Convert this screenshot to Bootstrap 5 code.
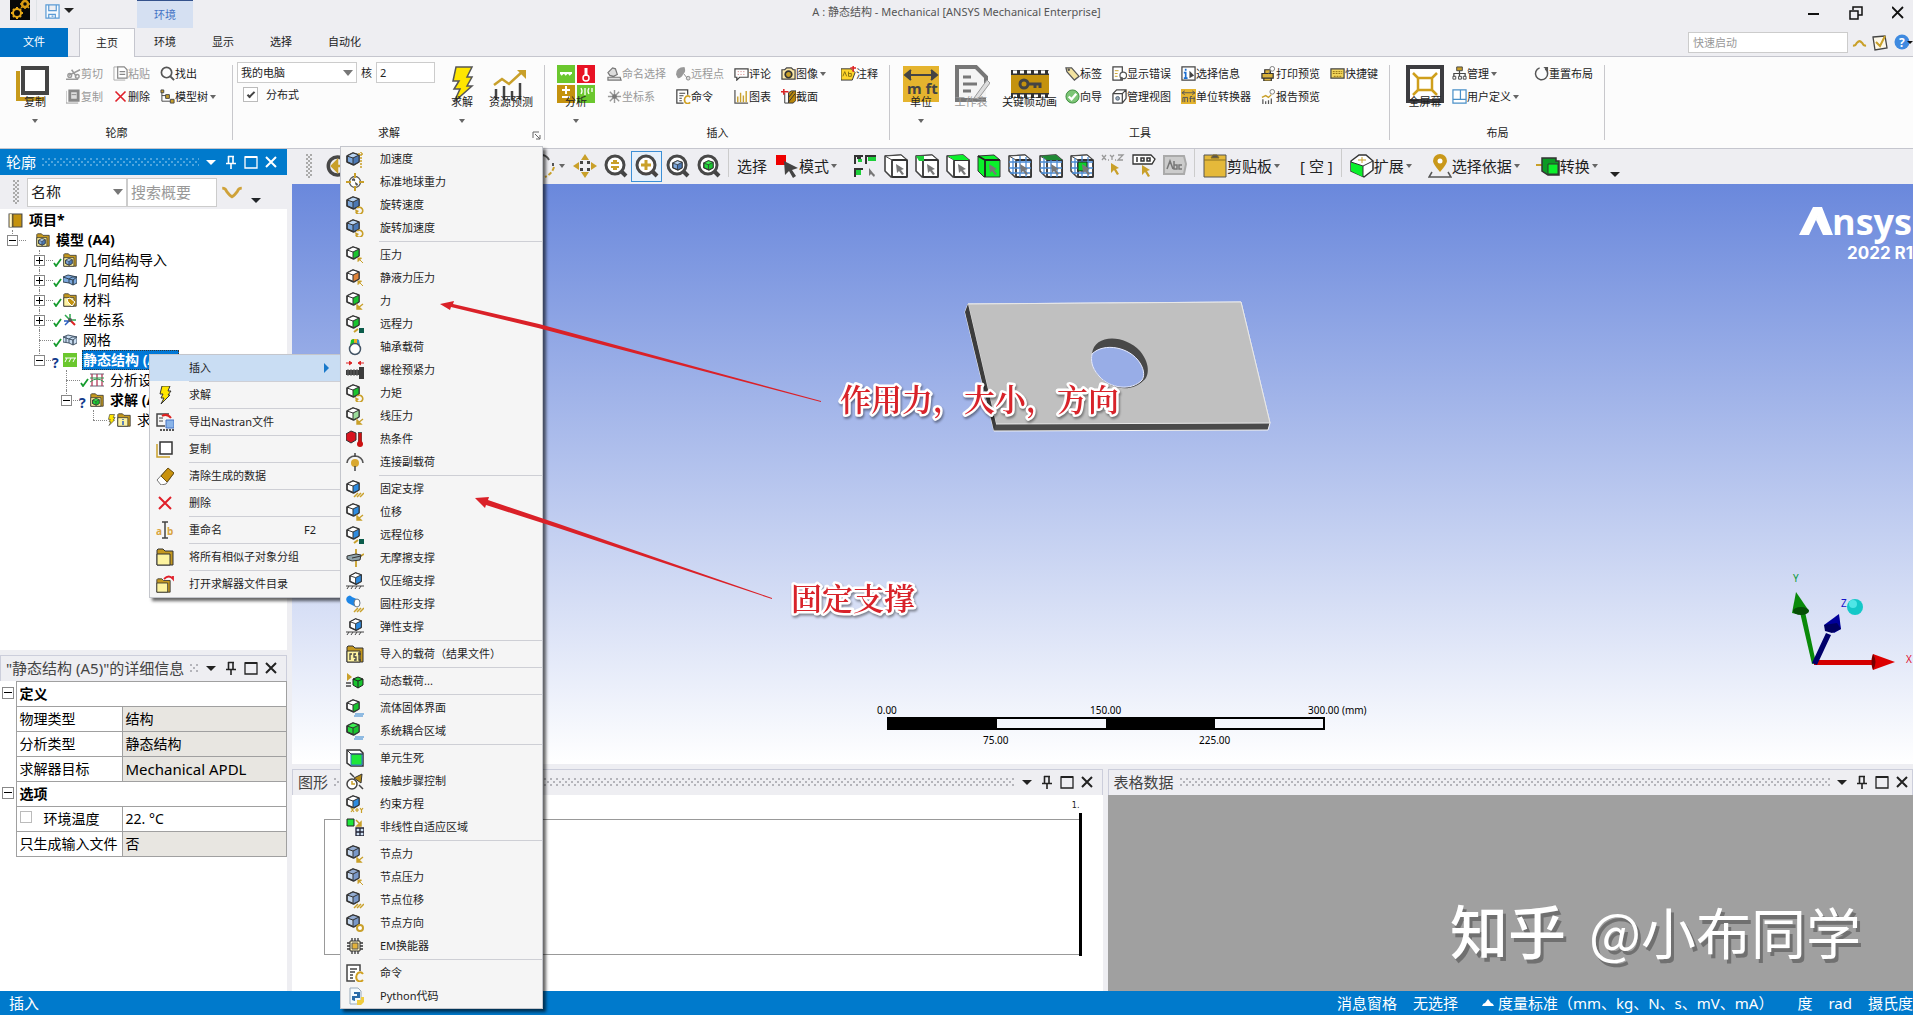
<!DOCTYPE html>
<html lang="zh-CN">
<head>
<meta charset="utf-8">
<meta name="viewport" content="width=device-width, initial-scale=1">
<title>A : 静态结构 - Mechanical [ANSYS Mechanical Enterprise]</title>
<link href="https://cdn.jsdelivr.net/npm/bootstrap@5.3.0/dist/css/bootstrap.min.css" rel="stylesheet">
<style>
:root{--chrome:#eeeef2;--accent:#007acc;--line:#c5c6ce;--gold:#c9a02a;--ink:#222}
body{font-family:"Noto Sans","Noto Sans CJK SC",sans-serif;font-size:11px;line-height:14px;color:var(--ink);background:var(--chrome)}
svg{flex:none;display:block}
.btn{--bs-btn-padding-x:0;--bs-btn-padding-y:0;--bs-btn-font-size:inherit;--bs-btn-line-height:inherit;--bs-btn-border-radius:0;--bs-btn-border-width:0;--bs-btn-color:inherit;white-space:nowrap}
.i14{width:14px;height:14px}.i15{width:15px;height:15px}.i18{width:18px;height:18px}.i24{width:24px;height:24px}
.tri{width:0;height:0;border:3px solid transparent;border-top:4px solid #666;border-bottom:0;flex:none}
.tri-l{border-width:5px;border-top:5px solid currentColor;border-bottom:0}
.gut5{margin-right:5px}
/* title */
.titlebar{height:28px}
.titlebar .side{flex:1 1 0}
.titletext{font-size:11px;line-height:18px;color:#555;padding-top:3px}
.ctxtab{width:56px;height:28px;margin-left:63px;background:#d5e0f2;border-top:1px solid #34528c;color:#4472c4}
.winbtn{width:30px;height:26px;margin-left:12px}
/* tabs */
.tabrow{height:29px;border-bottom:1px solid var(--line)}
.tabrow .nav-link{padding:0 18px;line-height:28px;color:var(--ink);height:29px}
.tabrow .file{background:#0072c6;color:#fff;padding:0 23px;margin-right:11px}
.tabrow .current{background:#fcfcfc;border:1px solid var(--line);border-bottom:0;padding:0 16px;margin-right:1px}
.quick{width:160px;height:21px;border:1px solid #ccc;font-size:11px;padding:2px 4px;color:#999}
/* ribbon */
.ribbon{background:#fcfcfc;border-bottom:1px solid var(--line);padding:5px 0 8px;height:92px}
.rgroup{background:linear-gradient(#c8c8cc,#c8c8cc) right bottom/1px 75px no-repeat}
.rgroup .cols{gap:10px}
.sb{height:23px}
.sb .tri{margin:0 5px 0 2px}
.big{padding-top:3px;height:64px;min-width:38px}
.big svg{width:38px;height:38px}
.big .cap{margin-top:-8px;position:relative}
.big .tri{margin-top:10px}
.dim{color:#999;opacity:1}
.rsel{width:120px}.selwrap{position:relative}
.selwrap::after{content:"";position:absolute;right:4px;top:50%;margin-top:-3px;border:5px solid transparent;border-top:6px solid #777;border-bottom:0;pointer-events:none}
.fld{border:1px solid #ccc;border-radius:0;background:#fff;color:var(--ink);padding:0 3px;appearance:none;height:21px;width:100%}
.fld::placeholder,.quick::placeholder{color:#999}
.w59{width:59px}
.tick{width:15px;height:15px;appearance:none;border:1px solid #bbb;background:#fff;margin:0 8px 0 6px;position:relative}
.tick:checked::after{content:"";position:absolute;left:3px;top:4px;width:8px;height:4px;border:solid #444;border-width:0 0 2px 2px;transform:rotate(-45deg)}
/* toolbars */
.grip{width:6px;height:24px;background:radial-gradient(circle at 1px 1px,#aaa 1px,transparent 1px) 0 0/4px 4px,radial-gradient(circle at 1px 1px,#aaa 1px,transparent 1px) 2px 2px/4px 4px}
.gfx{height:35px;font-size:15px;line-height:20px;padding:0 0 1px 14px}
.gfx .cell{width:31px;height:31px}
.gfx .on{border:1px solid #3c8fd6;background:#e6f0fa}
.gfx .vr{height:28px;opacity:1;background:#ccc}
.gfx .tri{margin-left:2px}
.under-menu{width:182px}
/* docked panels */
.phead{height:26px;font-size:15px;line-height:20px;color:#444;border:1px solid #cccedb;border-bottom:0;padding:0 5px 1px 5px}
.phead.lit{background:var(--accent);border-color:var(--accent);color:#fff}
.phead .dots{height:9px;margin:0 2px 0 6px;background:radial-gradient(circle at 1px 1px,#b4b4ba 1px,transparent 1px) 0 0/6px 6px,radial-gradient(circle at 1px 1px,#b4b4ba 1px,transparent 1px) 3px 3px/6px 6px}
.phead.lit .dots{background:radial-gradient(circle at 1px 1px,#4fa5de 1px,transparent 1px) 0 0/6px 6px,radial-gradient(circle at 1px 1px,#4fa5de 1px,transparent 1px) 3px 3px/6px 6px}
.phead .pb{width:20px;height:20px;color:#222}
.phead.lit .pb{color:#fff}
.leftcol{width:287px}
.findbar{height:34px;padding-left:13px;font-size:15px}
.findbar .fld{height:29px}
.w100x{width:100px}.w89{width:90px}
/* tree */
.tree{font-size:14px;line-height:20px;color:#000;padding-top:1px;background:#fff}
.tree ul{list-style:none;margin:0;padding:0}
.tree ul ul{padding-left:27px}
.tree li{position:relative}
.tree li::after{content:"";position:absolute;left:12px;top:0;bottom:0;border-left:1px dotted #888}
.tree li:last-child::after{bottom:auto;height:10px}
.tree .node{height:20px;display:flex;align-items:center;position:relative;white-space:nowrap}
.tree .node::before{content:"";position:absolute;left:12px;width:14px;top:10px;border-top:1px dotted #888}
.tree .ex{width:25px;z-index:1;display:flex;justify-content:center;position:relative}
.exbox{width:11px;height:11px;border:1px solid #888;background:#fff;position:relative;display:block;padding:0}
.exbox::before{content:"";position:absolute;left:1px;right:1px;top:4px;height:1px;background:#000}
.exbox.plus::after{content:"";position:absolute;top:1px;bottom:1px;left:4px;width:1px;background:#000}
.tree .st{width:11px;height:14px;z-index:1}
.tree .tx{margin-left:5px;padding:0 1px}
.tree .sel{background:#0078d7;color:#fff;outline:1px dotted #333;outline-offset:-1px;padding-right:9px}
.mark-q{font-weight:700;color:#123a8c;width:11px;text-align:center;padding-top:5px}
/* details */
.lowleft{height:341px;padding-top:5px}
.props{font-size:14px;line-height:20px;color:#000;width:100%;table-layout:fixed;border-collapse:collapse}
.props td,.props th{height:25px;padding:0 4px 0 3px;border:1px solid #a0a0a0;white-space:nowrap;overflow:hidden;font-weight:400}
.props .gut{border:0;padding:0 0 0 2px;width:16px;vertical-align:top}
.props .gut .exbox{margin-top:5px;width:12px;height:12px}
.props .ro{background:#e8e6e1}
.props .lat{font-size:15px}
.props th.sec{font-weight:700}
.props .gutcol{width:16px}
.props .namecol{width:106px}
.cbx{width:12px;height:12px;appearance:none;border:1px solid #bbb;margin:0 12px 0 0;vertical-align:1px}
/* bottom */
.dock{height:227px;padding-top:5px}
.gcol{flex:810 1 0}.tcol{flex:805 1 0}
.gbody{background:#fff;padding:4px 22px 36px 32px}
.gbody .end{height:20px;font:8px/14px "DejaVu Sans",sans-serif;padding-right:1px}
.plot{border:1px solid #999;position:relative}
.plot::after{content:"";position:absolute;right:-2px;top:-7px;bottom:-2px;width:3px;background:#000}
.grid-body{background:#a0a0a0}
.status{height:24px;background:var(--accent);color:#fff;font-size:15px;line-height:24px;padding-left:9px;overflow:hidden}
.status span{white-space:nowrap}
.view{background:linear-gradient(#6a88dc,#fff)}
/* menus */
.pop{position:absolute;background:#f5f5f5;border:1px solid #c4c6cc;box-shadow:3px 3px 3px rgba(0,0,0,.6);z-index:5;padding:0 0 1px}
.pop button{display:flex;align-items:center;width:100%;border:0;background:none;padding:0;text-align:left;color:#1e1e1e;white-space:nowrap}
.pop hr{margin:2px 0 1px 38px;border-color:#b4b6c0;opacity:.6}
#ctx{left:149px;top:354px;width:200px;padding:0}
#ctx button{height:26px;padding-left:6px;gap:15px}
#ctx hr{margin:0 0 0 39px}
#ctx .hot{background:#c9ddf3}
#sub{left:340px;top:146px;width:203px}
#sub button{height:23px;padding-left:5px;gap:16px}
.cube-g{--f:#fff;--r:#19c42f;--t:#fff}.cube-b{--f:#fff;--r:#2d8be0;--t:#fff}.cube-s{--f:#7ba7dc;--r:#4b78b4;--t:#b9d4f2}
.cube-w{--f:#fff;--r:#9cdc9c;--t:#fff}.cube-gg{--f:#22d83a;--r:#19c42f;--t:#3cf052}.cube-n{--f:#c3d6ee;--r:#7897c8;--t:#93abd0}.cube-h{--f:#fff;--r:#e0843a;--t:#fff}
.over{position:absolute;inset:0;z-index:8;pointer-events:none;width:100%;height:100%}
.note{font-family:"Noto Serif CJK SC","Noto Sans CJK SC",serif;font-weight:600;font-size:31px;fill:#d8232a;stroke:#fff;stroke-width:5px;stroke-linejoin:round;paint-order:stroke;filter:drop-shadow(1px 2px 1px rgba(0,0,0,.4))}
.wm{font-family:"Noto Sans CJK SC",sans-serif;fill:#fff;filter:drop-shadow(3px 4px 0 rgba(80,80,80,.6))}
.wm-logo{font-size:58px;font-weight:500}.wm-name{font-size:55px}
.axis{font:10px "Noto Sans",sans-serif}
</style>
<script src="https://cdn.jsdelivr.net/npm/bootstrap@5.3.0/dist/js/bootstrap.bundle.min.js"></script>
</head>
<body class="vh-100 overflow-hidden position-relative d-flex flex-column">

<svg width="0" height="0" class="position-absolute" aria-hidden="true"><defs>
<symbol id="cube" viewBox="0 0 18 18"><path d="M1 4l6-3 6 2v7l-5 3-7-3z" fill="var(--f)" stroke="#333" stroke-width="1.4" stroke-linejoin="round"/><path d="M1 4l6-3 6 2-5 3z" fill="var(--t)"/><path d="M7 6l6-3v7l-6 3z" fill="var(--r)"/><path d="M1 4l6-3 6 2v7l-6 3-6-3zM1 4l6 2 6-3M7 6v7" fill="none" stroke="#333" stroke-linejoin="round"/></symbol>
<symbol id="o-arr" viewBox="0 0 18 18"><path d="M17 12l-5 4M11 17v-4l4 4z" fill="#c9a02a" stroke="#c9a02a" stroke-width="1.4"/></symbol>
<symbol id="o-ul" viewBox="0 0 18 18"><path d="M17 17l-4-4M12 12h3.500l-3.500 3.500z" fill="#c9a02a" stroke="#c9a02a"/></symbol>
<symbol id="o-rot" viewBox="0 0 18 18"><path d="M11 12a3.500 3.500 0 1 1-1 4" fill="none" stroke="#c9a02a" stroke-width="1.600"/><path d="M9 13l1 5 3-3z" fill="#c9a02a"/></symbol>
<symbol id="o-hat" viewBox="0 0 18 18"><path d="M8 17l4-4M11 17l4-4M14 17l4-4" stroke="#c9a02a" stroke-width="1.500"/></symbol>
<symbol id="o-box" viewBox="0 0 18 18"><path d="M13 13h5v5h-5z" fill="#0b5c4b"/><path d="M8 17l4-3" stroke="#c9a02a" stroke-width="2"/></symbol>
<symbol id="o-hz" viewBox="0 0 18 18"><path d="M9 15h9M8 17h9" stroke="#6fa8dc" stroke-width="1.500"/></symbol>
<symbol id="o-gnd" viewBox="0 0 18 18"><path d="M0 14h18" stroke="#444"/><path d="M1 17l2-3M5 17l2-3M9 17l2-3M13 17l2-3" stroke="#444"/></symbol>
<symbol id="m-grav" viewBox="0 0 18 18"><circle cx="9" cy="9" r="5.500" fill="#fff" stroke="#555" stroke-width="1.300"/><path d="M6 6c2-2 4 0 3 2s3 1 3 4c-2 2-3-1-3-3S5 9 6 6" fill="#555"/><path d="M9 0v5M9 13v5M0 9h5M13 9h5" stroke="#c9a02a" stroke-width="2"/></symbol>
<symbol id="m-bear" viewBox="0 0 18 18"><path d="M4 8l2-7h6l2 7z" fill="#f0b020"/><path d="M4 8l1-6 3-1v6z" fill="#19c42f"/><path d="M11 1l2 1 1 6-3-2z" fill="#3a8ed0"/><circle cx="9" cy="11" r="5.500" fill="#fff" stroke="#456" stroke-width="1.500"/></symbol>
<symbol id="m-bolt" viewBox="0 0 18 18"><path d="M0 2h5M13 2h5M3 0l3 2-3 2M15 0l-3 2 3 2" stroke="#d22" fill="#d22"/><path d="M0 9h13V6h5v12h-5v-4H0z" fill="#3c3c3c"/><path d="M2 8v7M5 8v7M8 8v7M11 8v7" stroke="#666"/></symbol>
<symbol id="m-heat" viewBox="0 0 18 18"><path d="M0 4l5-3 5 2v7l-5 3-5-3z" fill="#d81420" stroke="#333"/><path d="M14 2v10" stroke="#555" stroke-width="4"/><path d="M14 3v10" stroke="#c11" stroke-width="3"/><circle cx="14" cy="14" r="3" fill="#c11"/></symbol>
<symbol id="m-joint" viewBox="0 0 18 18"><path d="M1 10a8 7 0 0 1 16 0" fill="none" stroke="#555" stroke-width="1.600"/><circle cx="9" cy="10" r="4" fill="#d9a830"/><path d="M9 0v4M9 13v5" stroke="#444" stroke-width="1.500"/></symbol>
<symbol id="m-fric" viewBox="0 0 18 18"><path d="M10 0v18M10 10l8-5" stroke="#c9a02a" stroke-width="1.800"/><path d="M1 7l9-2 5 1-1 5-8 1-5-2z" fill="#8fa3ab" stroke="#333"/><path d="M6 9l9-2" stroke="#333"/></symbol>
<symbol id="m-cyl" viewBox="0 0 18 18"><path d="M1 2q3-3 5 0l7 3q2 6-3 7L2 8q-3-3-1-6z" fill="#1e86e6"/><ellipse cx="11" cy="8" rx="3" ry="4" fill="#fff" stroke="#678"/><path d="M8 17l4-4M11 17l4-4M14 17l4-4" stroke="#c9a02a" stroke-width="1.500"/></symbol>
<symbol id="fold" viewBox="0 0 18 18"><path d="M1 17V2l1-1h5l2 2h8v14z" fill="#c4981f" stroke="#333"/><path d="M1 6h13v11H1z" fill="#fdf3a0" stroke="#333"/></symbol>
<symbol id="m-dyn" viewBox="0 0 18 18"><path d="M1 1l5 4-5 4z" fill="#c9a02a"/><path d="M0 11h5M0 14h5" stroke="#444" stroke-width="1.500"/><path d="M7 7l5-2 5 2v6l-5 3-5-3z" fill="#19c42f" stroke="#222"/><path d="M7 7l5 2 5-2M12 9v7" fill="none" stroke="#222"/></symbol>
<symbol id="m-life" viewBox="0 0 18 18"><path d="M1 1h13l3 3v13H5l-4-3z" fill="#fff" stroke="#333" stroke-width="1.500"/><path d="M5 5h11v11H5z" fill="#1ee63a" stroke="#2b7bd0"/><path d="M1 1l4 4h12" fill="none" stroke="#333"/></symbol>
<symbol id="m-step" viewBox="0 0 18 18"><circle cx="6" cy="12" r="5" fill="#fff" stroke="#444" stroke-width="1.500"/><path d="M6 9v3h3" fill="none" stroke="#c9a02a" stroke-width="1.500"/><path d="M8 6l8-4-1 9z" fill="#b38a1a" stroke="#333"/><path d="M4 1l4 4M13 13l4 4" stroke="#444" stroke-width="1.500"/></symbol>
<symbol id="m-ce" viewBox="0 0 18 18"><path d="M5 13l3 4M8 13l-3 4M9 15h4M11 13v4M14 13l1.500 2 1.500-2M15.500 15v3" stroke="#c9a02a" stroke-width="1.200" fill="none"/></symbol>
<symbol id="m-nla" viewBox="0 0 18 18"><path d="M1 1h7v7H1z" fill="#1ee63a" stroke="#222"/><path d="M10 2l4 4M15 4v4h-4z" stroke="#c9a02a" stroke-width="1.500" fill="#c9a02a"/><path d="M10 10h8v8h-8zM14 10v8M10 14h8" fill="#cfe2f5" stroke="#223" stroke-width="1.300"/></symbol>
<symbol id="m-chip" viewBox="0 0 18 18"><path d="M6 1v16M9 1v16M12 1v16M1 6h16M1 9h16M1 12h16" stroke="#333" stroke-width="1.300"/><path d="M4 4h10v10H4z" fill="#fff3c0" stroke="#333"/><path d="M6 6h6v6H6z" fill="#e3b23a" stroke="#555"/></symbol>
<symbol id="cmd" viewBox="0 0 18 18"><path d="M9 17H1V1h13v6" fill="#fff" stroke="#444" stroke-width="1.500"/><path d="M4 5h7M4 8h5M4 11h3M4 14h3" stroke="#444" stroke-width="1.300"/><path d="M17 10q-2-3-5-1-3 3-1 7 3 3 6 0" fill="none" stroke="#d0a020" stroke-width="2"/></symbol>
<symbol id="m-py" viewBox="0 0 18 18"><path d="M4 1h8l3 3v13H4z" fill="#f4fafd" stroke="#9ab"/><path d="M6 13V9h5V7H8V5h6v6H9v3z" fill="#2b6ca8"/><path d="M11 17v-4h4v-3h3v5l-3 3h-4z" fill="#f0cc40"/></symbol>
<symbol id="zap" viewBox="0 0 18 18"><path d="M6 0h8l-2 5h3l-3 4h2L5 18l3-6H5l2-4H4z" fill="#ffe600" stroke="#333"/></symbol>
<symbol id="c-nas" viewBox="0 0 18 18"><path d="M9 13H1V1h12" fill="none" stroke="#444" stroke-width="1.500"/><path d="M3 5h4M3 8h4" stroke="#444"/><path d="M6 3q5-3 9 2" fill="none" stroke="#d22" stroke-width="2"/><path d="M10 7h8v8h-8z" fill="#8ab4e8" stroke="#4472c4"/><path d="M4 17h14" stroke="#555" stroke-width="2" stroke-dasharray="2 1"/></symbol>
<symbol id="dup" viewBox="0 0 18 18"><path d="M1 4v13h13" fill="none" stroke="#c9a02a" stroke-width="1.500"/><path d="M4 2h12v12H4z" fill="#fff" stroke="#333" stroke-width="1.500"/></symbol>
<symbol id="c-ers" viewBox="0 0 18 18"><path d="M1 13l10-11 7 4-8 11-5 1z" fill="#fff" stroke="#777"/><path d="M5 9l7-8 6 5-7 9z" fill="#c9920e" stroke="#6b5010"/></symbol>
<symbol id="xr" viewBox="0 0 18 18"><path d="M3 3l12 12M15 3L3 15" stroke="#e0202a" stroke-width="2"/></symbol>
<symbol id="c-ren" viewBox="0 0 18 18"><path d="M9 1v16M6 1h6M6 17h6" stroke="#444" stroke-width="1.500"/><text x="0" y="14" font-size="10" font-weight="700" fill="#d9a441">a</text><text x="11" y="14" font-size="10" font-weight="700" fill="#d9a441">b</text></symbol>
<symbol id="c-open" viewBox="0 0 18 18"><use href="#fold" y="3" width="15" height="15"/><path d="M8 4q5-5 9 0v-3" fill="none" stroke="#e0202a" stroke-width="1.800"/></symbol>
<symbol id="tick" viewBox="0 0 11 14"><path d="M2 10l2 3 5-7" fill="none" stroke="#169b2e" stroke-width="1.800"/></symbol>
<symbol id="chev-d" viewBox="0 0 20 12"><path d="M1 2q3 0 4 3 3 4 5 5 2-1 5-5 1-3 4-3" fill="none" stroke="#cfa23a" stroke-width="2.600"/></symbol>
<symbol id="p-pin" viewBox="0 0 14 14"><path d="M4.500 1v7.500M9 1v7.500M4 1.500h6M2 8.500h10M7 8.500V14" stroke="currentColor" stroke-width="1.600" fill="none"/></symbol>
<symbol id="p-max" viewBox="0 0 14 14"><path d="M1 2h12v11H1z" fill="none" stroke="currentColor" stroke-width="1.300"/><path d="M1 2h12" stroke="currentColor" stroke-width="2"/></symbol>
<symbol id="p-x" viewBox="0 0 14 14"><path d="M2 2l10 10M12 2L2 12" stroke="currentColor" stroke-width="2"/></symbol>
<symbol id="gcube" viewBox="0 0 24 24"><path d="M1 2l16-1 6 5v17H7l-6-6z" fill="#fff" stroke="#444" stroke-width="1.600" stroke-linejoin="round"/><path d="M1 2l16-1 6 5H8z" fill="#fff" stroke="#444"/><rect x="8" y="6" width="15" height="17" rx="1" fill="#fff" stroke="#333" stroke-width="1.800"/></symbol>
<symbol id="cur" viewBox="0 0 24 24"><path d="M12 10l1 9 2-2 3 4 2-1-3-4 3-1z" fill="#777"/></symbol>
<symbol id="mesh" viewBox="0 0 24 24"><path d="M1 8h22M1 14h22M5 4v16M12 2v21M18 3v20M2 19h20" stroke="#4a8ad4" stroke-width="1.300" fill="none"/></symbol>
<symbol id="lens" viewBox="0 0 24 24"><path d="M16 16l6 6" stroke="#444" stroke-width="4"/><circle cx="11" cy="11" r="9" fill="#fff" stroke="#484848" stroke-width="3"/></symbol>
</defs></svg>

<header class="titlebar d-flex">
  <div class="side d-flex">
    <svg class="ms-2" width="24" height="20" viewBox="0 0 24 20"><path d="M2 0h20v20H2z" fill="#080808"/><path d="M9 7v12M3 13h12M5 9l8 8M13 9l-8 8" stroke="#e6a817" stroke-width="2"/><circle cx="9" cy="13" r="4" fill="#080808" stroke="#e6a817" stroke-width="2"/><circle cx="17" cy="4" r="3" fill="none" stroke="#d99a12" stroke-width="2.500"/><path d="M17 0v1M12 4h2M20 4h2M17 7v2M13 8l2-2M19 6l2 2" stroke="#d99a12" stroke-width="1.500"/></svg>
    <span class="border-start ms-1 h-75"></span>
    <button class="btn ms-2 align-self-start" type="button" aria-label="保存"><svg class="mt-1 i15" viewBox="0 0 16 16"><path d="M1 1h14v14H1zM4 1v6h8V1M4 15v-4h7v4M7 13h2" fill="#f6fafe" stroke="#5b9bd5" stroke-width="1.300"/></svg></button>
    <span class="tri tri-l ms-1 mt-2"></span>
    <div class="ctxtab d-flex align-items-center justify-content-center">环境</div>
  </div>
  <div class="titletext">A : 静态结构 - Mechanical [ANSYS Mechanical Enterprise]</div>
  <div class="side d-flex justify-content-end">
    <button class="btn winbtn d-flex justify-content-center align-items-center" type="button" aria-label="最小化"><svg width="12" height="12"><path d="M0 7h11" stroke="#111" stroke-width="2"/></svg></button>
    <button class="btn winbtn d-flex justify-content-center align-items-center" type="button" aria-label="还原"><svg width="14" height="14"><path d="M4 4V1h9v8H9M1 5h8v8H1z" fill="none" stroke="#111" stroke-width="1.500"/></svg></button>
    <button class="btn winbtn d-flex justify-content-center align-items-center" type="button" aria-label="关闭"><svg width="12" height="14"><path d="M0 1l11 11M11 1L0 12" stroke="#111" stroke-width="1.800"/></svg></button>
  </div>
</header>

<nav class="tabrow d-flex align-items-start">
  <a class="nav-link file" href="#">文件</a>
  <a class="nav-link current" href="#">主页</a>
  <a class="nav-link" href="#">环境</a>
  <a class="nav-link" href="#">显示</a>
  <a class="nav-link" href="#">选择</a>
  <a class="nav-link" href="#">自动化</a>
  <div class="ms-auto d-flex align-items-center gap-1 pt-1">
    <input class="quick" type="text" placeholder="快速启动" aria-label="快速启动">
    <svg width="15" height="12" viewBox="0 0 16 12"><path d="M1 9q3 0 4-3 2-2 3-2t3 2q1 3 4 3" fill="none" stroke="#c9a02a" stroke-width="2.200"/></svg>
    <svg width="18" height="17" viewBox="0 0 18 17"><path d="M2 3l12-1 2 12-12 2z" fill="#fdf8ea" stroke="#444" stroke-width="1.300"/><path d="M5 8l4 4 5-10" fill="none" stroke="#c9a02a" stroke-width="2"/></svg>
    <svg width="20" height="17" viewBox="0 0 20 17"><circle cx="9" cy="8" r="7.500" fill="#3f8ae0"/><text x="6" y="13" font-size="12" font-weight="700" fill="#fff">?</text><path d="M14 7h6l-3 3z" fill="#111"/></svg>
  </div>
</nav>

<section class="ribbon d-flex">
  <div class="rgroup d-flex flex-column">
    <div class="d-flex flex-fill">
      <button class="btn big d-flex flex-column align-items-center ms-3" type="button"><svg viewBox="4 0 38 38"><path d="M4 6v30h28v-4H8V6z" fill="#c79a1b"/><path d="M11 3h24v25H11z" fill="#fff" stroke="#444" stroke-width="4"/></svg><span class="cap">复制</span><span class="tri"></span></button>
      <div class="d-flex cols ms-2 ps-1 pe-2 me-1">
        <div><button class="btn sb d-flex align-items-center dim" type="button"><svg class="i15" viewBox="0 0 16 16"><path d="M0 14h13M3 10l12-6M6 4l5 7" stroke="#999" stroke-width="1.600"/><circle cx="4" cy="10" r="2" fill="none" stroke="#999" stroke-width="1.500"/><circle cx="12" cy="11" r="2" fill="none" stroke="#999" stroke-width="1.500"/></svg>剪切</button>
        <button class="btn sb d-flex align-items-center dim" type="button"><svg class="i15" viewBox="0 0 16 16"><path d="M0 2v13h13" fill="none" stroke="#999"/><path d="M4 2h9v10H4z" fill="#ddd" stroke="#888" stroke-width="3"/><path d="M6 6h5" stroke="#888"/></svg>复制</button></div>
        <div><button class="btn sb d-flex align-items-center dim" type="button"><svg class="i15" viewBox="0 0 16 16"><path d="M5 1H1v14h12" fill="none" stroke="#aaa"/><path d="M5 1h7l3 3v9H5zM7 6h6M7 9h6" fill="#fff" stroke="#888" stroke-width="1.300"/></svg>粘贴</button>
        <button class="btn sb d-flex align-items-center" type="button"><svg class="i15"><use href="#xr"/></svg>删除</button></div>
        <div><button class="btn sb d-flex align-items-center" type="button"><svg class="i15" viewBox="0 0 16 16"><circle cx="7" cy="7" r="5.500" fill="none" stroke="#555" stroke-width="1.800"/><path d="M11 11l4 4" stroke="#555" stroke-width="2"/></svg>找出</button>
        <button class="btn sb d-flex align-items-center" type="button"><svg class="i15" viewBox="0 0 16 16"><path d="M2 3v10h9M2 7h5" fill="none" stroke="#444"/><path d="M1 1h3v3H1zM6 6h4v4H6zM11 11h4v4h-4z" fill="#c9a02a" stroke="#444"/></svg>模型树<span class="tri"></span></button></div>
      </div>
    </div>
    <div class="text-center">轮廓</div>
  </div>

  <div class="rgroup d-flex flex-column position-relative">
    <div class="d-flex flex-fill ps-1 pe-2 me-1">
      <div>
        <div class="d-flex align-items-center gap-1">
          <div class="selwrap rsel"><select class="fld" aria-label="求解进程"><option>我的电脑</option></select></div>
          <label for="cores">核</label>
          <div class="w59"><input id="cores" class="fld" type="text" value="2"></div>
        </div>
        <div class="d-flex align-items-center pt-1"><input class="tick" type="checkbox" id="dist" checked><label for="dist">分布式</label></div>
      </div>
      <button class="btn big d-flex flex-column align-items-center ms-1 ps-1" type="button"><svg viewBox="0 0 38 38"><path d="M13 2h16l-5 10h5l-5 9h5L11 37l6-13h-6l5-8H10z" fill="#ffe600" stroke="#555" stroke-width="1.500"/></svg><span class="cap">求解</span><span class="tri"></span></button>
      <button class="btn big d-flex flex-column align-items-center ms-2" type="button"><svg viewBox="0 0 38 38"><path d="M4 35V24M12 35V21M20 35V26M28 35V18" stroke="#444" stroke-width="2.500"/><path d="M2 20l8-6 7 5 13-12" fill="none" stroke="#c9a02a" stroke-width="2.500"/><path d="M25 5h9v9z" fill="#c9a02a"/></svg><span class="cap">资源预测</span></button>
    </div>
    <div class="text-center">求解</div>
    <svg class="position-absolute bottom-0 end-0 me-1" width="9" height="9" viewBox="0 0 9 9"><path d="M1 7V1h6M3 3l5 5M8 4v4H4" fill="none" stroke="#666"/></svg>
  </div>

  <div class="rgroup d-flex flex-column">
    <div class="d-flex flex-fill ps-1">
      <button class="btn big d-flex flex-column align-items-center ms-2" type="button"><svg viewBox="0 0 38 38"><path d="M0 0h18v18H0z" fill="#6bc72e"/><path d="M20 0h18v18H20z" fill="#e81224"/><path d="M0 20h18v18H0z" fill="#c4920e"/><path d="M20 20h18v18H20z" fill="#6bc72e"/><path d="M3 8h12M4 10l2-2M8 10l2-2M12 10l2-2M5 25h8M9 21v8M5 32h8" stroke="#fff" stroke-width="2"/><path d="M29 3v8" stroke="#fff" stroke-width="3"/><circle cx="29" cy="13" r="3" fill="none" stroke="#fff" stroke-width="1.500"/><path d="M24 23q2 3 0 6M28 23v7M32 23q-2 3 0 6M35 23v4" stroke="#fff" stroke-width="1.300" fill="none"/></svg><span class="cap">分析</span><span class="tri"></span></button>
      <div class="d-flex cols ms-2 ps-1 pe-2 me-1">
        <div><button class="btn sb d-flex align-items-center dim" type="button"><svg class="i15" viewBox="0 0 16 16"><path d="M1 7l5-5 3 1 2 6-4 2-4-1zM1 12h13l1 3H1z" fill="#ddd" stroke="#777" stroke-width="1.300"/></svg>命名选择</button>
        <button class="btn sb d-flex align-items-center dim" type="button"><svg class="i15" viewBox="0 0 16 16"><path d="M8 1v14M1 8h14M3 3l10 10M13 3L3 13" stroke="#999" stroke-width="1.500"/><circle cx="8" cy="8" r="2.500" fill="#777"/></svg>坐标系</button></div>
        <div><button class="btn sb d-flex align-items-center dim" type="button"><svg class="i15" viewBox="0 0 16 16"><path d="M0 9q0-8 9-8 2 5-1 7-2 5-6 5z" fill="#999"/><path d="M8 8l4 5" stroke="#888"/><circle cx="13" cy="13" r="2" fill="#ddd" stroke="#888"/></svg>远程点</button>
        <button class="btn sb d-flex align-items-center" type="button"><svg class="i15"><use href="#cmd"/></svg>命令</button></div>
        <div><button class="btn sb d-flex align-items-center" type="button"><svg class="i15" viewBox="0 0 16 16"><path d="M1 3h14v9H6l-3 3v-3H1z" fill="#fff" stroke="#444" stroke-width="1.300"/><path d="M4 6h9M4 9h9" stroke="#c66" stroke-dasharray="1 2"/></svg>评论</button>
        <button class="btn sb d-flex align-items-center" type="button"><svg class="i15" viewBox="0 0 16 16"><path d="M1 1v14h14" fill="none" stroke="#555" stroke-width="1.300"/><path d="M4 14V8M7 14V4M10 14V7M13 14V2" stroke="#c9a02a" stroke-width="1.500"/></svg>图表</button></div>
        <div><button class="btn sb d-flex align-items-center" type="button"><svg class="i15" viewBox="0 0 16 16"><path d="M1 4h3l2-2h5l2 2h2v10H1z" fill="#fbe7a8" stroke="#444" stroke-width="1.300"/><circle cx="8" cy="9" r="3.500" fill="#c9a02a" stroke="#333" stroke-width="1.800"/></svg>图像<span class="tri"></span></button>
        <button class="btn sb d-flex align-items-center" type="button"><svg class="i15" viewBox="0 0 16 16"><path d="M8 4l3-2h5v10l-3 3H8z" fill="#b8860b" stroke="#333"/><path d="M8 14l7-9M8 9l5-6" stroke="#333"/><path d="M4 4v11h4" fill="none" stroke="#333"/><path d="M0 3h8M3 0v6" stroke="#d22" stroke-width="1.600"/></svg>截面</button></div>
        <div><button class="btn sb d-flex align-items-center" type="button"><svg class="i15" viewBox="0 0 16 16"><path d="M0 3h11l4 4-3 8H0z" fill="#ffd42a" stroke="#333"/><path d="M2 11l2-5 2 5M8 6v5h3V8H8" fill="none" stroke="#86700e"/><path d="M10 2h6M13 0v6" stroke="#d22" stroke-width="1.600"/></svg>注释</button></div>
      </div>
    </div>
    <div class="text-center">插入</div>
  </div>

  <div class="rgroup d-flex flex-column">
    <div class="d-flex flex-fill ps-1">
      <button class="btn big d-flex flex-column align-items-center mx-2" type="button"><svg viewBox="0 0 38 38"><path d="M1 1h36v36H1z" fill="#e5b42e"/><path d="M3 10h32M9 5l-6 5 6 5M29 5l6 5-6 5" fill="#444" stroke="#444" stroke-width="2"/><text x="5" y="29" font-size="15" font-weight="700" fill="#444" font-family="Noto Sans">m ft</text></svg><span class="cap">单位</span><span class="tri"></span></button>
      <button class="btn big d-flex flex-column align-items-center dim ms-1 me-2" type="button"><svg viewBox="0 0 38 38"><path d="M34 18V12L24 2H5v33h29" fill="#f4f4f4" stroke="#777" stroke-width="4"/><path d="M11 12h8M11 19h14M11 26h8" stroke="#777" stroke-width="3"/><path d="M22 33l13-18 3 3-12 16z" fill="#ddd" stroke="#999"/></svg><span class="cap">工作表</span></button>
      <button class="btn big d-flex flex-column align-items-center ms-1" type="button"><svg viewBox="0 0 38 38"><path d="M0 5h38v28H0z" fill="#333"/><path d="M0 10h38v18H0z" fill="#c4920e"/><path d="M2 7h38M2 31h38" stroke="#fff" stroke-width="3" stroke-dasharray="4 3"/><circle cx="13" cy="19" r="4" fill="none" stroke="#444" stroke-width="3"/><path d="M17 19h12v4M24 19v4" fill="none" stroke="#444" stroke-width="3"/></svg><span class="cap">关键帧动画</span></button>
      <div class="d-flex cols ms-2 pe-2 me-1">
        <div><button class="btn sb d-flex align-items-center" type="button"><svg class="i15" viewBox="0 0 16 16"><path d="M1 2l6 0 8 9-5 4-8-9z" fill="#f3e3a0" stroke="#555" stroke-width="1.300"/><circle cx="4" cy="4" r="1.300" fill="#555"/></svg>标签</button>
        <button class="btn sb d-flex align-items-center" type="button"><svg class="i15" viewBox="0 0 16 16"><circle cx="8" cy="8" r="7" fill="#7cc576" stroke="#3d8b3d"/><path d="M4 8l3 3 5-6" fill="none" stroke="#fff" stroke-width="2.500"/></svg>向导</button></div>
        <div><button class="btn sb d-flex align-items-center" type="button"><svg class="i15" viewBox="0 0 16 16"><path d="M1 1h10v14H1z" fill="#fff" stroke="#444" stroke-width="1.300"/><path d="M3 5h4M3 8h3M3 11h3" stroke="#c9a02a"/><circle cx="12" cy="10" r="3.500" fill="#fff" stroke="#555" stroke-width="1.300"/><path d="M9 15l2-3" stroke="#555" stroke-width="2"/></svg>显示错误</button>
        <button class="btn sb d-flex align-items-center" type="button"><svg class="i15" viewBox="0 0 16 16"><path d="M1 5l4-4h10v9l-4 5H1zM1 5h10v10M11 5l4-4" fill="#fff" stroke="#444" stroke-width="1.300"/><circle cx="6" cy="10" r="2" fill="#9ab" stroke="#567"/></svg>管理视图</button></div>
        <div><button class="btn sb d-flex align-items-center" type="button"><svg class="i15" viewBox="0 0 16 16"><path d="M1 1h14v14H1z" fill="#fff" stroke="#444" stroke-width="1.300"/><path d="M5 3v2M5 6v7M3 13h4M3 7h2" stroke="#1e6fd0" stroke-width="1.800"/><path d="M9 5v8l5-3z" fill="#444"/></svg>选择信息</button>
        <button class="btn sb d-flex align-items-center" type="button"><svg class="i15" viewBox="0 0 16 16"><path d="M0 0h16v16H0z" fill="#e5b42e"/><path d="M1 4h14M4 2L1 4l3 2M12 2l3 2-3 2M2 14V9h2v5M4 9h3v5M10 14V8h2M14 8v6M9 10h6" fill="none" stroke="#555"/></svg>单位转换器</button></div>
        <div><button class="btn sb d-flex align-items-center" type="button"><svg class="i15" viewBox="0 0 16 16"><path d="M4 8V4h6v4M1 8h12v5H1zM3 13h8v3H3z" fill="#d9b13a" stroke="#333" stroke-width="1.300"/><circle cx="12" cy="3" r="2.500" fill="#fff" stroke="#777"/><path d="M10 5L8 8" stroke="#777"/></svg>打印预览</button>
        <button class="btn sb d-flex align-items-center" type="button"><svg class="i15" viewBox="0 0 16 16"><path d="M2 16v-5M5 16v-3M8 16v-4M11 16v-6" stroke="#555" stroke-width="1.300"/><path d="M1 9l4-2 3 2 3-3" fill="none" stroke="#c9a02a" stroke-width="1.500"/><circle cx="12" cy="3" r="2.500" fill="#fff" stroke="#777"/></svg>报告预览</button></div>
        <div><button class="btn sb d-flex align-items-center" type="button"><svg class="i15" viewBox="0 0 16 16"><path d="M1 3h14v10H1z" fill="#f4d75c" stroke="#444" stroke-width="1.300"/><path d="M3 6h10M3 8h10M4 11h8" stroke="#8a6a10" stroke-dasharray="2 1"/></svg>快捷键</button></div>
      </div>
    </div>
    <div class="text-center">工具</div>
  </div>

  <div class="rgroup d-flex flex-column">
    <div class="d-flex flex-fill">
      <button class="btn big d-flex flex-column align-items-center ms-3" type="button"><svg viewBox="0 0 38 38"><path d="M2 2h34v34H2z" fill="#fff" stroke="#3c3c40" stroke-width="4"/><path d="M12 13h14v12H12zM12 13L7 8M26 13l5-5M12 25l-5 5M26 25l5 5" fill="none" stroke="#cf9f1c" stroke-width="2.500"/></svg><span class="cap">全屏幕</span></button>
      <div class="d-flex cols ms-2 pe-2 me-1">
        <div><button class="btn sb d-flex align-items-center" type="button"><svg class="i15" viewBox="0 0 16 16"><path d="M8 5v6M2 12V8h12v4" fill="none" stroke="#444" stroke-width="1.300"/><path d="M5 1h6v4H5z" fill="#c9a02a" stroke="#444"/><path d="M1 11h3v3H1zM7 11h3v3H7zM12 11h3v3h-3z" fill="#fff" stroke="#444"/></svg>管理<span class="tri"></span></button>
        <button class="btn sb d-flex align-items-center" type="button"><svg class="i15" viewBox="0 0 16 16"><path d="M1 1h14v14H1zM1 11h14M9 1v10" fill="#fff" stroke="#4a90c8" stroke-width="1.300"/></svg>用户定义<span class="tri"></span></button></div>
        <div><button class="btn sb d-flex align-items-center" type="button"><svg class="i15" viewBox="0 0 16 16"><path d="M6 2a6.500 6.500 0 1 0 6 1" fill="none" stroke="#555" stroke-width="1.600"/><path d="M10 1h5v5z" fill="#555"/></svg>重置布局</button></div>
      </div>
    </div>
    <div class="text-center">布局</div>
  </div>
</section>

<main class="d-flex flex-fill">
  <div class="leftcol d-flex flex-column gut5">
    <div class="phead lit d-flex align-items-center"><span>轮廓</span><span class="dots flex-fill"></span>
      <button class="btn pb d-flex align-items-center justify-content-center" type="button" aria-label="菜单"><span class="tri tri-l"></span></button>
      <button class="btn pb d-flex align-items-center justify-content-center" type="button" aria-label="固定"><svg class="i14"><use href="#p-pin"/></svg></button>
      <button class="btn pb d-flex align-items-center justify-content-center" type="button" aria-label="最大化"><svg class="i14"><use href="#p-max"/></svg></button>
      <button class="btn pb d-flex align-items-center justify-content-center" type="button" aria-label="关闭"><svg class="i14"><use href="#p-x"/></svg></button>
    </div>
    <div class="findbar d-flex align-items-center">
      <span class="grip me-2"></span>
      <div class="selwrap w100x"><select class="fld" aria-label="搜索方式"><option>名称</option></select></div>
      <div class="w89"><input class="fld" type="text" placeholder="搜索概要" aria-label="搜索概要"></div>
      <svg class="ms-1" width="22" height="13"><use href="#chev-d"/></svg>
      <span class="tri tri-l ms-2 mt-3 text-dark"></span>
    </div>
    <div class="tree flex-fill overflow-hidden">
      <div class="d-flex align-items-center fw-bold ms-2"><svg class="i15" viewBox="0 0 14 14"><path d="M1 1h12v12H1z" fill="#c4920e" stroke="#444"/><path d="M2.500 1v12" stroke="#fff8d0" stroke-width="2"/><path d="M4.500 1v12" stroke="#444"/></svg><span class="tx">项目*</span></div>
      <ul>
        <li><div class="node fw-bold"><span class="ex"><button class="exbox" type="button" aria-label="折叠"></button></span><span class="st"></span><svg class="i14"><use href="#fold"/><use href="#cube" class="cube-s" x="2" y="5" width="10" height="10"/></svg><span class="tx">模型 (A4)</span></div>
          <ul>
            <li><div class="node"><span class="ex"><button class="exbox plus" type="button" aria-label="展开"></button></span><svg class="st"><use href="#tick"/></svg><svg class="i14"><use href="#fold"/><use href="#cube" class="cube-s" x="2" y="5" width="10" height="10"/></svg><span class="tx">几何结构导入</span></div></li>
            <li><div class="node"><span class="ex"><button class="exbox plus" type="button" aria-label="展开"></button></span><svg class="st"><use href="#tick"/></svg><svg class="i14" viewBox="0 0 14 14"><path d="M0 4l5-2 9 2v6l-4 2-4-2-6-1z" fill="#7ba7dc" stroke="#345"/><path d="M0 4l6 2 3-2 5 0M6 6v4M10 7v5l0-5 4-3M6 6l4 1" fill="none" stroke="#345"/></svg><span class="tx">几何结构</span></div></li>
            <li><div class="node"><span class="ex"><button class="exbox plus" type="button" aria-label="展开"></button></span><svg class="st"><use href="#tick"/></svg><svg class="i14" viewBox="0 0 14 14"><use href="#fold" width="14" height="14"/><path d="M4 6l3-1 5 4-3 4-4-4z" fill="#c4920e" stroke="#fff"/></svg><span class="tx">材料</span></div></li>
            <li><div class="node"><span class="ex"><button class="exbox plus" type="button" aria-label="展开"></button></span><svg class="st"><use href="#tick"/></svg><svg class="i14" viewBox="0 0 14 14"><path d="M7 7V1M7 7L2 2M7 7h6" stroke="#2fa84f" stroke-width="1.500"/><path d="M7 7l5 5" stroke="#d22" stroke-width="2"/><path d="M7 7l-5 5M1 8h4" stroke="#2b5fc0" stroke-width="1.500"/><circle cx="7" cy="7" r="2" fill="#555"/></svg><span class="tx">坐标系</span></div></li>
            <li><div class="node"><span class="ex"></span><svg class="st"><use href="#tick"/></svg><svg class="i14" viewBox="0 0 14 14"><path d="M0 4l5-2 9 2v6l-4 2-4-2-6-1z" fill="#c8dcf0" stroke="#456"/><path d="M0 4l6 2 3-2 5 0M3 3v6M6 6v4M10 7v5l0-5 4-3M6 6l4 1" fill="none" stroke="#456"/></svg><span class="tx">网格</span></div></li>
            <li><div class="node"><span class="ex"><button class="exbox" type="button" aria-label="折叠"></button></span><span class="st mark-q d-flex align-items-center">?</span><svg class="i14" viewBox="0 0 14 14"><path d="M0 0h14v14H0z" fill="#6bc72e"/><path d="M2 5h11M2 9l2-4M6 9l2-4M10 9l2-4" stroke="#fff"/></svg><span class="tx fw-bold sel">静态结构 (A5)</span></div>
              <ul>
                <li><div class="node"><span class="ex"></span><svg class="st"><use href="#tick"/></svg><svg class="i14" viewBox="0 0 14 14"><path d="M0 1h14M0 13h14" stroke="#667"/><path d="M2 1v12M7 1v12M12 1v12" stroke="#b33a5a" stroke-width="1.300"/><path d="M0 5h14M0 9q7-6 14 0" stroke="#2b9a4f" fill="none"/></svg><span class="tx">分析设置</span></div></li>
                <li><div class="node"><span class="ex"><button class="exbox" type="button" aria-label="折叠"></button></span><span class="st mark-q d-flex align-items-center">?</span><svg class="i14"><use href="#fold"/><use href="#cube" class="cube-gg" x="2" y="5" width="10" height="10"/></svg><span class="tx fw-bold">求解 (A6)</span></div>
                  <ul><li><div class="node"><span class="ex"></span><svg class="st"><use href="#zap"/></svg><svg class="i14" viewBox="0 0 14 14"><use href="#fold" width="14" height="14"/><path d="M6 6v1M6 8v4" stroke="#2b5fc0" stroke-width="1.500"/></svg><span class="tx">求解信息</span></div></li></ul>
                </li>
              </ul>
            </li>
          </ul>
        </li>
      </ul>
    </div>
    <div class="lowleft d-flex flex-column">
      <div class="phead d-flex align-items-center"><span>"静态结构 (A5)"的详细信息</span><span class="dots flex-fill"></span>
        <button class="btn pb d-flex align-items-center justify-content-center" type="button" aria-label="菜单"><span class="tri tri-l"></span></button>
        <button class="btn pb d-flex align-items-center justify-content-center" type="button" aria-label="固定"><svg class="i14"><use href="#p-pin"/></svg></button>
        <button class="btn pb d-flex align-items-center justify-content-center" type="button" aria-label="最大化"><svg class="i14"><use href="#p-max"/></svg></button>
        <button class="btn pb d-flex align-items-center justify-content-center" type="button" aria-label="关闭"><svg class="i14"><use href="#p-x"/></svg></button>
      </div>
      <div class="bg-white flex-fill">
        <table class="props">
          <colgroup><col class="gutcol"><col class="namecol"><col></colgroup>
          <tr><td class="gut"><button class="exbox" type="button" aria-label="折叠"></button></td><th class="sec" colspan="2">定义</th></tr>
          <tr><td class="gut"></td><td>物理类型</td><td class="ro">结构</td></tr>
          <tr><td class="gut"></td><td>分析类型</td><td class="ro">静态结构</td></tr>
          <tr><td class="gut"></td><td>求解器目标</td><td class="ro lat">Mechanical APDL</td></tr>
          <tr><td class="gut"><button class="exbox" type="button" aria-label="折叠"></button></td><th class="sec" colspan="2">选项</th></tr>
          <tr><td class="gut"></td><td><input class="cbx" type="checkbox" id="envt"><label for="envt">环境温度</label></td><td>22. °C</td></tr>
          <tr><td class="gut"></td><td>只生成输入文件</td><td class="ro">否</td></tr>
        </table>
      </div>
    </div>
  </div>

  <div class="d-flex flex-column flex-fill">
    <div class="gfx d-flex align-items-center">
      <span class="grip me-2"></span>
      <button class="btn cell d-flex align-items-center justify-content-center" type="button" aria-label="上一视图"><svg class="i24" viewBox="0 0 24 24"><path d="M20 18a9 9 0 1 1 0-12" fill="none" stroke="#484848" stroke-width="3.500"/><path d="M20 12H9M13 7l-5 5 5 5z" stroke="#c9a02a" stroke-width="2.500" fill="#c9a02a"/></svg></button>
      <span class="under-menu"></span>
      <svg class="i24" viewBox="0 0 24 24"><path d="M2 3a9 9 0 0 1 14 3M20 9v3" fill="none" stroke="#555" stroke-width="2"/><path d="M21 13q-2 7-9 10" fill="none" stroke="#c9a02a" stroke-width="2" stroke-dasharray="4 2"/></svg>
      <span class="tri me-1"></span>
      <button class="btn cell d-flex align-items-center justify-content-center" type="button" aria-label="平移"><svg class="i24" viewBox="0 0 24 24"><path d="M12 0l4 6H8zM12 24l4-6H8zM0 12l6-4v8zM24 12l-6-4v8z" fill="#c9a02a"/><path d="M7 7h3v3H7zM14 7h3v3h-3zM7 14h3v3H7zM14 14h3v3h-3z" fill="#444"/></svg></button>
      <button class="btn cell d-flex align-items-center justify-content-center" type="button" aria-label="缩放"><svg class="i24" viewBox="0 0 24 24"><use href="#lens"/><path d="M7 9h8M7 13h8M9 7h4M9 15h4" stroke="#c9a02a" stroke-width="2"/></svg></button>
      <button class="btn cell on d-flex align-items-center justify-content-center" type="button" aria-label="框选缩放"><svg class="i24" viewBox="0 0 24 24"><use href="#lens"/><path d="M6 11h10M11 6v10" stroke="#c9a02a" stroke-width="3"/></svg></button>
      <button class="btn cell d-flex align-items-center justify-content-center" type="button" aria-label="适合窗口"><svg class="i24" viewBox="0 0 24 24"><use href="#lens"/><use href="#cube" class="cube-s" x="6" y="6" width="14" height="14"/></svg></button>
      <button class="btn cell d-flex align-items-center justify-content-center me-1" type="button" aria-label="缩放选择"><svg class="i24" viewBox="0 0 24 24"><use href="#lens"/><use href="#cube" class="cube-gg" x="6" y="6" width="14" height="14"/></svg></button>
      <span class="vr me-2"></span>
      <span>选择</span>
      <button class="btn d-flex align-items-center ms-2 me-2" type="button"><svg class="i24" viewBox="0 0 24 24"><path d="M1 1h10v10H1z" fill="#e00"/><path d="M9 7l14 7-6 2 4 6-3 2-4-7-4 4z" fill="#444"/></svg>模式<span class="tri"></span></button>
      <button class="btn cell d-flex align-items-center justify-content-center ms-1" type="button" aria-label="选择组"><svg class="i24" viewBox="0 0 24 24"><path d="M2 10V2h8M4 4h4M13 10V2h10M2 23v-8h8" fill="none" stroke="#333" stroke-width="2"/><path d="M5 5h4v3H5zM15 3h8v4h-8zM3 16h5v5H3z" fill="#1ccf3a"/><path d="M16 14v8l2-2 3 3 1-2-2-2z" fill="#777"/></svg></button>
      <button class="btn cell d-flex align-items-center justify-content-center" type="button" aria-label="顶点"><svg class="i24"><use href="#gcube"/><use href="#cur"/></svg></button>
      <button class="btn cell d-flex align-items-center justify-content-center" type="button" aria-label="边"><svg class="i24"><use href="#gcube"/><path d="M1 2l8 0v5H4z" fill="#1ccf3a"/><use href="#cur"/></svg></button>
      <button class="btn cell d-flex align-items-center justify-content-center" type="button" aria-label="面"><svg class="i24"><use href="#gcube"/><path d="M2 2l15-1 6 5H8z" fill="#0bf02b"/><use href="#cur"/></svg></button>
      <button class="btn cell d-flex align-items-center justify-content-center" type="button" aria-label="体"><svg class="i24"><path d="M1 2l16-1 6 5v17H7l-6-6z" fill="#0bf02b" stroke="#333"/><path d="M8 6h15M8 6v17M8 6L1 2" fill="none" stroke="#222" stroke-width="1.800"/><use href="#cur"/></svg></button>
      <button class="btn cell d-flex align-items-center justify-content-center" type="button" aria-label="节点"><svg class="i24"><use href="#gcube"/><use href="#mesh"/><use href="#cur"/></svg></button>
      <button class="btn cell d-flex align-items-center justify-content-center" type="button" aria-label="单元面"><svg class="i24"><use href="#gcube"/><use href="#mesh"/><path d="M2 2l15-1 6 5H8z" fill="#1f8a35"/><use href="#cur"/></svg></button>
      <button class="btn cell d-flex align-items-center justify-content-center" type="button" aria-label="单元"><svg class="i24"><use href="#gcube"/><use href="#mesh"/><path d="M8 8h9v9H8z" fill="#0bd02b" stroke="#222"/><use href="#cur"/></svg></button>
      <button class="btn cell d-flex align-items-center justify-content-center" type="button" aria-label="坐标"><svg class="i24" viewBox="0 0 24 24"><path d="M1 1l4 5M5 1L1 6M9 1l2 2 2-2M11 3v3M17 1h5l-5 5h5M7 6h1M14 6h1" fill="none" stroke="#999" stroke-width="1.300"/><path d="M10 9l8 5-3 1 3 5-2 1-3-5-3 3z" fill="#c9a02a"/></svg></button>
      <button class="btn cell d-flex align-items-center justify-content-center" type="button" aria-label="编号"><svg class="i24" viewBox="0 0 24 24"><path d="M1 1h18l4 4-3 5H1z" fill="#fff" stroke="#333" stroke-width="1.300"/><path d="M5 3v5M9 4h3v3H9zM15 4h3v3h-3z" fill="none" stroke="#333" stroke-width="1.500"/><path d="M10 11l8 5-3 1 3 5-2 1-3-5-3 3z" fill="#c9a02a"/></svg></button>
      <button class="btn cell d-flex align-items-center justify-content-center me-1" type="button" aria-label="标注"><svg class="i24" viewBox="0 0 24 24"><path d="M1 2h20l2 8-2 10H1z" fill="#ccc" stroke="#aaa" stroke-width="2"/><path d="M4 15l3-8 3 8M11 7v8h3v-4h-3M19 11h-3v4h3" fill="none" stroke="#777" stroke-width="1.500"/></svg></button>
      <span class="vr me-2"></span>
      <button class="btn d-flex align-items-center me-3" type="button"><svg class="i24" viewBox="0 0 24 24"><path d="M1 1h22v22H1z" fill="#e5b93a" stroke="#555"/><path d="M1 6h22M8 4h8l-2-3h-4z" fill="#555" stroke="#8a7020"/></svg>剪贴板<span class="tri"></span></button>
      <span class="ms-1 me-2">[ 空 ]</span>
      <span class="vr me-2"></span>
      <button class="btn d-flex align-items-center me-3" type="button"><svg class="i24" viewBox="0 0 24 24"><path d="M1 7l8-6h7l7 6v9l-9 7-13-6z" fill="#fff" stroke="#333" stroke-width="1.500"/><path d="M1 8l12 4v11L1 17z" fill="#0bf02b"/><path d="M1 8l12 4 10-5M13 12v11" fill="none" stroke="#333"/><path d="M8 6h8M12 3v6" stroke="#c9a02a"/></svg>扩展<span class="tri"></span></button>
      <button class="btn d-flex align-items-center me-3" type="button"><svg class="i24" viewBox="0 0 24 24"><path d="M12 18Q5 10 5 7a7 7 0 0 1 14 0q0 3-7 11z" fill="#c9981a"/><circle cx="12" cy="7" r="2.500" fill="#fff"/><path d="M4 18l-3 5h22l-3-5" fill="none" stroke="#555" stroke-width="1.500"/></svg>选择依据<span class="tri"></span></button>
      <button class="btn d-flex align-items-center me-2" type="button"><svg class="i24" viewBox="0 0 24 24"><path d="M0 11h6" stroke="#c9a02a" stroke-width="2"/><path d="M6 4h14v3h3v14H12l-6-4z" fill="#0c9a24" stroke="#333" stroke-width="1.500"/><path d="M12 10h10v10H12z" fill="#0bf02b" stroke="#333"/></svg>转换<span class="tri"></span></button>
      <span class="tri tri-l mt-3 ms-1"></span>
    </div>
    <div class="view flex-fill position-relative overflow-hidden">
      <svg class="position-absolute w-100 h-100" viewBox="292 184 1621 580" preserveAspectRatio="none">
        <path d="M968 304L965 312 994 431 1268 430 1270 423 1241 302z" fill="#4a4a4a" stroke="#f4f4f4"/>
        <path d="M968 304L1241 302 1270 423 996 424z" fill="#c0c0c0" stroke="#e8e8e8"/>
        <path d="M968 304L965 312 994 431 996 424z" fill="#3c3c3c"/>
        <path d="M1092 354C1094 334 1124 334 1140 351 1152 366 1148 378 1143 381 1130 394 1108 388 1098 375 1092 367 1091 360 1092 354z" fill="#484848"/>
        <path d="M1092 354C1104 342 1130 347 1140 363 1145 371 1144 377 1142 380 1132 391 1110 389 1099 376 1091 367 1091 360 1092 354z" fill="#98ade7" stroke="#e8ecff"/>
        <path d="M888 718h436v11H888z" fill="none" stroke="#000" stroke-width="2"/><path d="M888 718h109v11H888zM1106 718h109v11h-109z"/>
        <g font-size="10" font-family="Noto Sans" fill="#000"><text x="877" y="714">0.00</text><text x="1090" y="714">150.00</text><text x="1308" y="714">300.00 (mm)</text><text x="983" y="744">75.00</text><text x="1199" y="744">225.00</text></g>
        <g class="axis"><path d="M1814 660h60v5h-60z" fill="#d40000"/><path d="M1873 654l22 8-22 8q-3-8 0-16z" fill="#d00"/><path d="M1873 654q5 8 0 16-3-8 0-16z" fill="#700"/>
        <path d="M1812 664l-13-56 5-1 12 56z" fill="#0a8a0a"/><path d="M1796 592l13 19q-8 5-17 2z" fill="#0a8a0a"/><ellipse cx="1801" cy="611" rx="8" ry="4" fill="#065006"/>
        <path d="M1812 663l14-30 5 2-14 30z" fill="#00006a"/><path d="M1839 614l2 15-7 4-10-8z" fill="#00009a"/><path d="M1824 625l1 6 7 2 9-4-4-6z" fill="#000060"/>
        <circle cx="1855" cy="607" r="8" fill="#14c8c8"/><circle cx="1853" cy="604" r="4" fill="#4fe6e6"/>
        <text x="1793" y="582" fill="#0a9a3a">Y</text><text x="1841" y="607" fill="#1414c8">Z</text><text x="1906" y="663" fill="#e01030">X</text></g>
        <path d="M1799 235l14-28h9l-13 28zM1822 207l11 28h-10l-7-15z" fill="#fff"/>
        <text x="1832" y="235" fill="#fff" font-size="36" font-weight="700" font-family="Open Sans">nsys</text>
        <text x="1847" y="259" fill="#fff" font-size="17" font-weight="700" font-family="Inter">2022 R1</text>
      </svg>
    </div>
    <div class="dock d-flex">
      <div class="gcol d-flex flex-column gut5">
        <div class="phead d-flex align-items-center"><span>图形</span><span class="dots flex-fill"></span>
          <button class="btn pb d-flex align-items-center justify-content-center" type="button" aria-label="菜单"><span class="tri tri-l"></span></button>
          <button class="btn pb d-flex align-items-center justify-content-center" type="button" aria-label="固定"><svg class="i14"><use href="#p-pin"/></svg></button>
          <button class="btn pb d-flex align-items-center justify-content-center" type="button" aria-label="最大化"><svg class="i14"><use href="#p-max"/></svg></button>
          <button class="btn pb d-flex align-items-center justify-content-center" type="button" aria-label="关闭"><svg class="i14"><use href="#p-x"/></svg></button>
        </div>
        <div class="gbody flex-fill d-flex flex-column"><div class="end text-end">1.</div><div class="plot flex-fill"></div></div>
      </div>
      <div class="tcol d-flex flex-column">
        <div class="phead pe-0 d-flex align-items-center"><span>表格数据</span><span class="dots flex-fill"></span>
          <button class="btn pb d-flex align-items-center justify-content-center" type="button" aria-label="菜单"><span class="tri tri-l"></span></button>
          <button class="btn pb d-flex align-items-center justify-content-center" type="button" aria-label="固定"><svg class="i14"><use href="#p-pin"/></svg></button>
          <button class="btn pb d-flex align-items-center justify-content-center" type="button" aria-label="最大化"><svg class="i14"><use href="#p-max"/></svg></button>
          <button class="btn pb d-flex align-items-center justify-content-center" type="button" aria-label="关闭"><svg class="i14"><use href="#p-x"/></svg></button>
        </div>
        <div class="grid-body flex-fill"></div>
      </div>
    </div>
  </div>
</main>

<footer class="status d-flex">
  <span class="me-auto">插入</span>
  <span class="me-3">消息窗格</span>
  <span class="me-4">无选择</span>
  <svg class="mt-2 me-1" width="12" height="8"><path d="M0 7q1-3 3-3l3-4 3 4q2 0 3 3z" fill="#fff"/></svg>
  <span class="me-4">度量标准（mm、kg、N、s、mV、mA）</span>
  <span class="me-3">度</span>
  <span class="me-3">rad</span>
  <span>摄氏度</span>
</footer>

<div class="pop" id="ctx" role="menu">
  <button class="hot" type="button"><svg class="i18"></svg>插入<svg class="ms-auto me-3" width="8" height="10"><path d="M0 0l5 5-5 5z" fill="#1979ca"/></svg></button><hr>
  <button type="button"><svg class="i18"><use href="#zap"/></svg>求解</button><hr>
  <button type="button"><svg class="i18"><use href="#c-nas"/></svg>导出Nastran文件</button><hr>
  <button type="button"><svg class="i18"><use href="#dup"/></svg>复制</button><hr>
  <button type="button"><svg class="i18"><use href="#c-ers"/></svg>清除生成的数据</button><hr>
  <button type="button"><svg class="i18"><use href="#xr"/></svg>删除</button><hr>
  <button type="button"><svg class="i18"><use href="#c-ren"/></svg>重命名<span class="ms-auto me-4 pe-2">F2</span></button><hr>
  <button type="button"><svg class="i18"><use href="#fold"/></svg>将所有相似子对象分组</button><hr>
  <button type="button"><svg class="i18"><use href="#c-open"/></svg>打开求解器文件目录</button>
</div>

<div class="pop" id="sub" role="menu">
  <button type="button"><svg class="i18 cube-s"><use href="#cube" y="2"/><path d="M15 18V2M12 4h6" stroke="#c9a02a" stroke-width="1.500" stroke-dasharray="2 1"/></svg>加速度</button>
  <button type="button"><svg class="i18"><use href="#m-grav"/></svg>标准地球重力</button>
  <button type="button"><svg class="i18 cube-s"><use href="#cube"/><use href="#o-rot"/></svg>旋转速度</button>
  <button type="button"><svg class="i18 cube-s"><use href="#cube"/><use href="#o-rot"/></svg>旋转加速度</button><hr>
  <button type="button"><svg class="i18 cube-g"><use href="#cube"/><use href="#o-ul"/></svg>压力</button>
  <button type="button"><svg class="i18 cube-h"><use href="#cube"/><use href="#o-ul"/></svg>静液力压力</button>
  <button type="button"><svg class="i18 cube-g"><use href="#cube"/><use href="#o-arr"/></svg>力</button>
  <button type="button"><svg class="i18 cube-g"><use href="#cube"/><use href="#o-box"/></svg>远程力</button>
  <button type="button"><svg class="i18"><use href="#m-bear"/></svg>轴承载荷</button>
  <button type="button"><svg class="i18"><use href="#m-bolt"/></svg>螺栓预紧力</button>
  <button type="button"><svg class="i18 cube-g"><use href="#cube"/><use href="#o-rot"/></svg>力矩</button>
  <button type="button"><svg class="i18 cube-w"><use href="#cube"/><use href="#o-arr"/></svg>线压力</button>
  <button type="button"><svg class="i18"><use href="#m-heat"/></svg>热条件</button>
  <button type="button"><svg class="i18"><use href="#m-joint"/></svg>连接副载荷</button><hr>
  <button type="button"><svg class="i18 cube-b"><use href="#cube"/><use href="#o-hat"/></svg>固定支撑</button>
  <button type="button"><svg class="i18 cube-b"><use href="#cube"/><use href="#o-arr"/></svg>位移</button>
  <button type="button"><svg class="i18 cube-b"><use href="#cube"/><use href="#o-box"/></svg>远程位移</button>
  <button type="button"><svg class="i18"><use href="#m-fric"/></svg>无摩擦支撑</button>
  <button type="button"><svg class="i18 cube-b"><use href="#cube" x="3" width="17" height="17"/><use href="#o-gnd"/></svg>仅压缩支撑</button>
  <button type="button"><svg class="i18"><use href="#m-cyl"/></svg>圆柱形支撑</button>
  <button type="button"><svg class="i18 cube-b"><use href="#cube" x="3" width="17" height="17"/><use href="#o-gnd"/></svg>弹性支撑</button><hr>
  <button type="button"><svg class="i18"><use href="#fold"/><path d="M4 15V9h2M10 9H8v3h2v3H8M13 7v8h2M12 9h3" fill="none" stroke="#444" stroke-width="1.300"/></svg>导入的载荷（结果文件）</button><hr>
  <button type="button"><svg class="i18"><use href="#m-dyn"/></svg>动态载荷...</button><hr>
  <button type="button"><svg class="i18 cube-g"><use href="#cube"/><use href="#o-hz"/></svg>流体固体界面</button>
  <button type="button"><svg class="i18 cube-gg"><use href="#cube"/><use href="#o-hz"/></svg>系统耦合区域</button><hr>
  <button type="button"><svg class="i18"><use href="#m-life"/></svg>单元生死</button>
  <button type="button"><svg class="i18"><use href="#m-step"/></svg>接触步骤控制</button>
  <button type="button"><svg class="i18 cube-b"><use href="#cube"/><use href="#m-ce"/></svg>约束方程</button>
  <button type="button"><svg class="i18"><use href="#m-nla"/></svg>非线性自适应区域</button><hr>
  <button type="button"><svg class="i18 cube-n"><use href="#cube"/><use href="#o-arr"/></svg>节点力</button>
  <button type="button"><svg class="i18 cube-n"><use href="#cube"/><use href="#o-ul"/></svg>节点压力</button>
  <button type="button"><svg class="i18 cube-n"><use href="#cube"/><use href="#o-hat"/></svg>节点位移</button>
  <button type="button"><svg class="i18 cube-n"><use href="#cube"/><circle cx="14" cy="14" r="3" fill="#fff" stroke="#c9a02a" stroke-width="2"/></svg>节点方向</button>
  <button type="button"><svg class="i18"><use href="#m-chip"/></svg>EM换能器</button><hr>
  <button type="button"><svg class="i18"><use href="#cmd"/></svg>命令</button>
  <button type="button"><svg class="i18"><use href="#m-py"/></svg>Python代码</button>
</div>

<svg class="over" viewBox="0 0 1913 1015" preserveAspectRatio="none">
  <path d="M440 304l14-3-1 3 86 20 282 77v1l-283-74-87-21-1 3z" fill="#da2128"/>
  <path d="M475 498l14-1-1 3 71 24 213 74v1l-214-71-72-23-1 3z" fill="#da2128"/>
  <text class="note" x="840" y="411">作用力，大小，方向</text>
  <text class="note" x="791" y="610">固定支撑</text>
  <text class="wm wm-logo" x="1450" y="954">知乎</text>
  <text class="wm wm-name" x="1589" y="954">@小布同学</text>
</svg>
</body>
</html>
